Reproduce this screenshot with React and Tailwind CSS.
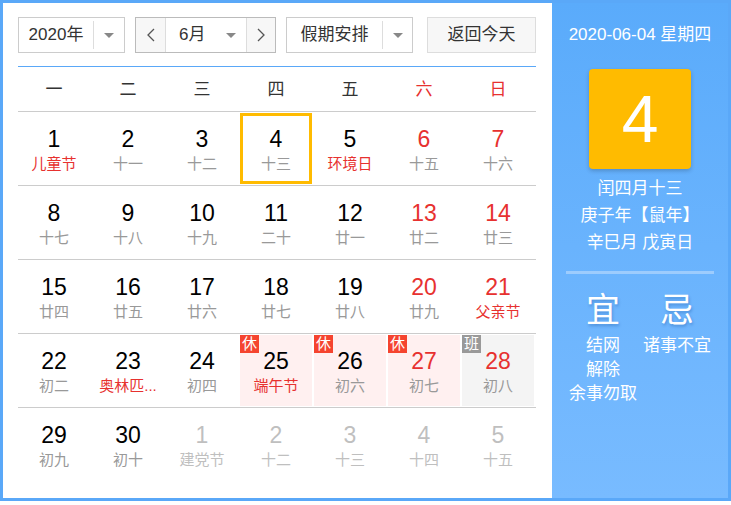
import React from "react";

const FONT = { fontFamily: '"Liberation Sans", Arial, "Noto Sans CJK SC", sans-serif' };

const WEEK = ["一", "二", "三", "四", "五", "六", "日"];

// day, lunar text, flags
const DAYS = [
  [1, "儿童节", "fest"], [2, "十一"], [3, "十二"], [4, "十三", "today"], [5, "环境日", "fest"], [6, "十五"], [7, "十六"],
  [8, "十七"], [9, "十八"], [10, "十九"], [11, "二十"], [12, "廿一"], [13, "廿二"], [14, "廿三"],
  [15, "廿四"], [16, "廿五"], [17, "廿六"], [18, "廿七"], [19, "廿八"], [20, "廿九"], [21, "父亲节", "fest"],
  [22, "初二"], [23, "奥林匹...", "fest"], [24, "初四"], [25, "端午节", "fest rest"], [26, "初六", "rest"], [27, "初七", "rest"], [28, "初八", "work"],
  [29, "初九"], [30, "初十"], [1, "建党节", "other"], [2, "十二", "other"], [3, "十三", "other"], [4, "十四", "other"], [5, "十五", "other"],
];

function Caret() {
  return <span className="w-0 h-0 border-l-[5px] border-r-[5px] border-t-[5px] border-l-transparent border-r-transparent border-t-[#888]" />;
}

function Chevron({ dir }) {
  return (
    <svg width="8" height="14" viewBox="0 0 8 14">
      <path d={dir === "left" ? "M7 1 L1 7 L7 13" : "M1 1 L7 7 L1 13"} fill="none" stroke="#555" strokeWidth="1.3" />
    </svg>
  );
}

function Cell({ d, i }) {
  const [num, lunar, flags = ""] = d;
  const col = i % 7;
  const weekend = col >= 5;
  const other = flags.includes("other");
  const fest = flags.includes("fest");
  const rest = flags.includes("rest");
  const work = flags.includes("work");
  const today = flags.includes("today");

  let bg = "bg-white";
  if (rest) bg = "bg-[#fff0f0]";
  if (work) bg = "bg-[#f4f4f4]";

  const numColor = other ? "text-[#bfbfbf]" : weekend ? "text-[#e7312f]" : "text-black";
  const lunarColor = other ? "text-[#bfbfbf]" : fest ? "text-[#e7312f]" : "text-[#999]";

  return (
    <div className={`relative mr-[2px] my-px h-[71px] flex flex-col items-center ${bg} ${today ? "border-[3px] border-[#ffbb00] pt-[8px]" : "pt-[11px]"}`}>
      {rest && (
        <span className="absolute left-0 top-0 w-[19px] h-[18px] bg-[#f5442f] text-white text-[15px] leading-[18px] text-center">休</span>
      )}
      {work && (
        <span className="absolute left-0 top-0 w-[19px] h-[18px] bg-[#999] text-white text-[15px] leading-[18px] text-center">班</span>
      )}
      <span className={`text-[23px] leading-[30px] ${numColor}`}>{num}</span>
      <span className={`text-[15px] leading-[20px] whitespace-nowrap ${lunarColor}`}>{lunar}</span>
    </div>
  );
}

export default function App() {
  const rows = [];
  for (let r = 0; r < 5; r++) rows.push(DAYS.slice(r * 7, r * 7 + 7));

  return (
    <div style={FONT} className="w-[731px] h-[501px] flex border-[3px] border-[#5aa8f8] bg-white">
      {/* left: calendar */}
      <div className="w-[549px] bg-white pl-[15px] pr-[16px] pt-[14px]">
        <div className="flex items-center h-[36px] text-[17px] text-[#333]">
          <div className="w-[107px] h-[36px] border border-[#ccc] flex items-center">
            <span className="w-[74px] text-center">2020年</span>
            <span className="h-[28px] border-l border-[#ddd]" />
            <span className="flex-1 flex justify-center"><Caret /></span>
          </div>
          <div className="ml-[10px] w-[141px] h-[36px] border border-[#bbb] flex">
            <span className="w-[30px] bg-[#f7f7f7] border-r border-[#ddd] flex items-center justify-center"><Chevron dir="left" /></span>
            <span className="w-[80px] flex items-center pl-[13px] bg-white">
              6月
              <span className="ml-auto mr-[10px] flex"><Caret /></span>
            </span>
            <span className="flex-1 bg-[#f7f7f7] border-l border-[#ddd] flex items-center justify-center"><Chevron dir="right" /></span>
          </div>
          <div className="ml-[10px] w-[127px] h-[36px] border border-[#ccc] flex items-center">
            <span className="w-[95px] text-center">假期安排</span>
            <span className="h-[28px] border-l border-[#ddd]" />
            <span className="flex-1 flex justify-center"><Caret /></span>
          </div>
          <button className="ml-[14px] w-[109px] h-[36px] border border-[#ddd] bg-[#f7f7f7] text-[17px] text-[#333]">返回今天</button>
        </div>

        <div className="mt-[13px] border-t border-[#5aa8f8]">
          <div className="grid grid-cols-7 h-[45px] items-center border-b border-[#ccc] text-[17px]">
            {WEEK.map((w, i) => (
              <div key={w} className={`text-center pr-[2px] pt-[1px] ${i >= 5 ? "text-[#e7312f]" : "text-[#333]"}`}>{w}</div>
            ))}
          </div>
          {rows.map((row, r) => (
            <div key={r} className={`grid grid-cols-7 ${r < 4 ? "border-b border-[#ccc]" : ""}`}>
              {row.map((d, c) => (
                <Cell key={c} d={d} i={r * 7 + c} />
              ))}
            </div>
          ))}
        </div>
      </div>

      {/* right: today info */}
      <div className="flex-1 bg-gradient-to-b from-[#5aabfb] to-[#78bbff] text-white flex flex-col items-center">
        <div className="mt-[20px] text-[17px] leading-[24px] whitespace-nowrap">2020-06-04 星期四</div>
        <div className="mt-[22px] w-[102px] h-[100px] rounded bg-[#ffbb00] shadow-[0_2px_4px_rgba(0,0,0,0.2)] flex items-center justify-center text-[66px] leading-none">4</div>
        <div className="mt-[6px] text-[17px] leading-[27px] text-center whitespace-nowrap">
          <div>闰四月十三</div>
          <div>庚子年【鼠年】</div>
          <div>辛巳月 戊寅日</div>
        </div>
        <div className="mt-[15px] w-[148px] h-[3px] bg-[#9dccfd]" />
        <div className="w-[148px] grid grid-cols-2 mt-[14px]">
          <div className="flex flex-col items-center">
            <div className="text-[34px] leading-[44px] [text-shadow:1px_2px_3px_rgba(0,60,140,0.3)]">宜</div>
            <div className="mt-[2px] text-[17px] leading-[24px] text-center">
              <div>结网</div>
              <div>解除</div>
              <div className="whitespace-nowrap">余事勿取</div>
            </div>
          </div>
          <div className="flex flex-col items-center">
            <div className="text-[34px] leading-[44px] [text-shadow:1px_2px_3px_rgba(0,60,140,0.3)]">忌</div>
            <div className="mt-[2px] text-[17px] leading-[24px] text-center whitespace-nowrap">
              <div>诸事不宜</div>
            </div>
          </div>
        </div>
      </div>
    </div>
  );
}
